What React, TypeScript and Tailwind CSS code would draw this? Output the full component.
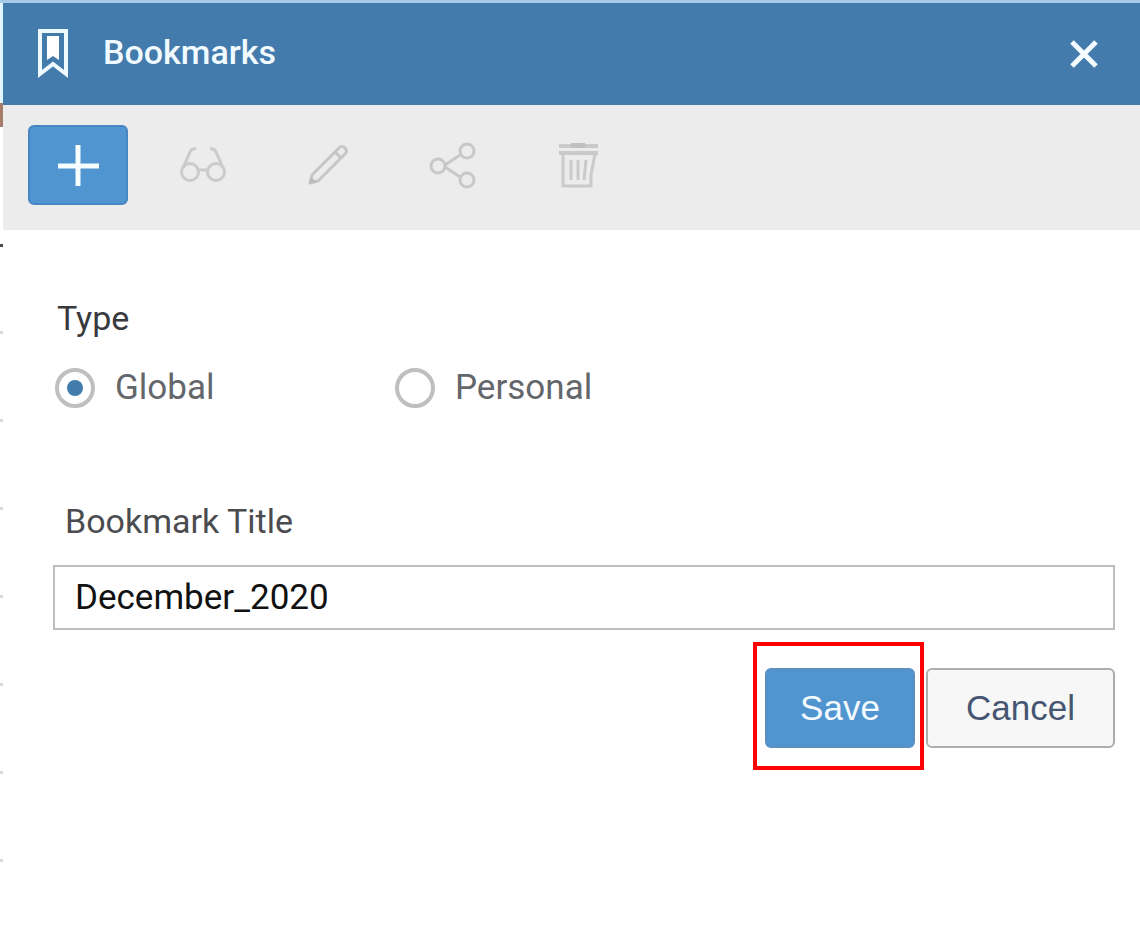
import cn from "clsx"
import { useState } from "react"
import type { ReactNode } from "react"

const BookmarkIcon = () => (
  <svg className="w-8 h-13" viewBox="0 0 32 52" fill="none" aria-hidden="true">
    <path d="M3 3H29V46L16 36L3 46Z" stroke="#eefaff" strokeWidth="4" />
    <path d="M10 8H22V32L16 28L10 32Z" fill="#fff" />
  </svg>
)

const CloseIcon = () => (
  <svg className="w-8 h-8" viewBox="0 0 32 32" fill="none" aria-hidden="true">
    <path d="M4 4L28 28M28 4L4 28" stroke="#f4fcff" strokeWidth="5" />
  </svg>
)

const PlusIcon = () => (
  <svg className="w-12 h-12" viewBox="0 0 48 48" fill="none" aria-hidden="true">
    <path d="M24 4V45M4 25H45" stroke="#f6fdff" strokeWidth="5" />
  </svg>
)

const GlassesIcon = () => (
  <svg className="w-12 h-12" viewBox="0 0 48 48" fill="none" aria-hidden="true">
    <g stroke="#cbcbcb" strokeWidth="3">
      <circle cx="11" cy="31" r="8.5" />
      <circle cx="37" cy="31" r="8.5" />
      <path d="M19 29H29M4 27L11 11Q13 7 17 8M44 27L37 11Q35 7 31 8" />
    </g>
  </svg>
)

const PencilIcon = () => (
  <svg className="w-12 h-12" viewBox="0 0 48 48" fill="none" aria-hidden="true">
    <g stroke="#c6c6c6" strokeWidth="3" strokeLinejoin="round">
      <path d="M6 42L8 34L35 7Q38 4 41 7Q44 10 41 13L14 40Z" />
      <path d="M31 11L37 17" />
    </g>
    <path d="M5 43L7 36L13 41Z" fill="#bdbdbd" />
  </svg>
)

const ShareIcon = () => (
  <svg className="w-12 h-12" viewBox="0 0 48 48" fill="none" aria-hidden="true">
    <g stroke="#c8c8c8" strokeWidth="3">
      <circle cx="9" cy="25" r="7" />
      <circle cx="38" cy="10" r="7" />
      <circle cx="38" cy="39" r="7" />
      <path d="M16 24L31 14M16 26L31 36" />
    </g>
  </svg>
)

const TrashIcon = () => (
  <svg className="w-12 h-12" viewBox="0 0 48 48" fill="none" aria-hidden="true">
    <g stroke="#cacaca" strokeWidth="3">
      <path d="M5 5H44M5 12H44" strokeWidth="4" />
      <path d="M9 13V45H37V34L41 13" />
      <path d="M17 19V39M24 19V39M32 19L30 39" />
    </g>
    <path d="M17 2H31V7H17Z" fill="#c0c0c0" />
  </svg>
)

const ToolbarButton = ({
  label,
  primary,
  children,
}: {
  label: string
  primary?: boolean
  children: ReactNode
}) => (
  <button
    type="button"
    aria-label={label}
    disabled={!primary}
    className={cn(
      "flex justify-center items-center w-25 h-20 rounded-md",
      primary && "bg-[#5195d0] border-2 border-[#4586c3]"
    )}
  >
    {children}
  </button>
)

const TypeOption = ({
  label,
  checked,
  onChange,
}: {
  label: string
  checked: boolean
  onChange: () => void
}) => (
  <label className="flex gap-5 items-center w-[340px] text-[35px] text-[#63676b]">
    <input
      type="radio"
      name="type"
      className="grid place-items-center w-10 h-10 bg-white rounded-full border-4 border-[#bfbfbf] appearance-none checked:before:block checked:before:w-4 checked:before:h-4 checked:before:rounded-full checked:before:bg-[#427cac]"
      checked={checked}
      onChange={onChange}
    />
    {label}
  </label>
)

// Sliver of the page that stays visible beside the panel
const PageEdge = () => (
  <div className="flex flex-col w-[3px] shrink-0" aria-hidden="true">
    <div className="h-[100px] bg-[#e2f6fd]" />
    <div className="h-6 bg-[#a67c6b]" />
    <div className="mt-[117px] h-[3px] bg-[#4a4a4a]" />
    <div className="flex flex-col gap-[85px] mt-[84px]">
      {[0, 1, 2, 3, 4, 5, 6].map((row) => (
        <div key={row} className="h-[3px] bg-[#dcdcdc]" />
      ))}
    </div>
  </div>
)

const App = () => {
  const [type, setType] = useState("Global")
  const [title, setTitle] = useState("December_2020")

  return (
    <div className="flex min-h-screen bg-white border-t-3 border-[#a8cbea] font-['Roboto','Liberation_Sans',sans-serif] text-[34px] leading-10">
      <PageEdge />
      <div className="flex-1 min-w-0">
        <header className="flex items-center py-[25px] pr-10 pl-[34px] bg-[#447bad]">
          <BookmarkIcon />
          <h1 className="flex-1 pb-1 ml-[34px] font-medium text-[#f1faff]">Bookmarks</h1>
          <button type="button" aria-label="Close">
            <CloseIcon />
          </button>
        </header>

        <div className="flex gap-[25px] pt-5 pb-[25px] pl-[25px] bg-[#ececec]">
          <ToolbarButton label="Add" primary>
            <PlusIcon />
          </ToolbarButton>
          <ToolbarButton label="View">
            <GlassesIcon />
          </ToolbarButton>
          <ToolbarButton label="Edit">
            <PencilIcon />
          </ToolbarButton>
          <ToolbarButton label="Share">
            <ShareIcon />
          </ToolbarButton>
          <ToolbarButton label="Delete">
            <TrashIcon />
          </ToolbarButton>
        </div>

        <form
          className="pt-[68px] pr-[25px] pl-[50px]"
          onSubmit={(event) => event.preventDefault()}
        >
          <fieldset>
            <legend className="px-1 text-[#3a3a3e]">Type</legend>
            <div className="flex px-[2px] mt-[30px]">
              {["Global", "Personal"].map((option) => (
                <TypeOption
                  key={option}
                  label={option}
                  checked={type === option}
                  onChange={() => setType(option)}
                />
              ))}
            </div>
          </fieldset>

          <label htmlFor="bookmark-title" className="block px-3 mt-[93px] text-[#4b4c50]">
            Bookmark Title
          </label>
          <input
            id="bookmark-title"
            type="text"
            className="px-5 mt-6 w-full h-[65px] text-[35px] text-[#111] bg-white border-2 border-[#bdbdbd]"
            value={title}
            onChange={(event) => setTitle(event.target.value)}
          />

          <div className="flex gap-[11px] justify-end mt-[38px] font-['Liberation_Sans',sans-serif] text-[35px]">
            <div className="relative">
              <button
                type="submit"
                className="w-[150px] h-20 text-[#f4fbff] bg-[#5195d0] rounded-md border-2 border-[#5a8fc0]"
              >
                Save
              </button>
              <div className="absolute -top-[26px] -right-[9px] -bottom-[22px] -left-3 border-4 border-[#fe0000] pointer-events-none" />
            </div>
            <button
              type="button"
              className="w-[189px] h-20 text-[#465672] bg-[#f7f7f7] rounded-md border-2 border-[#adadad]"
            >
              Cancel
            </button>
          </div>
        </form>
      </div>
    </div>
  )
}

export default App
